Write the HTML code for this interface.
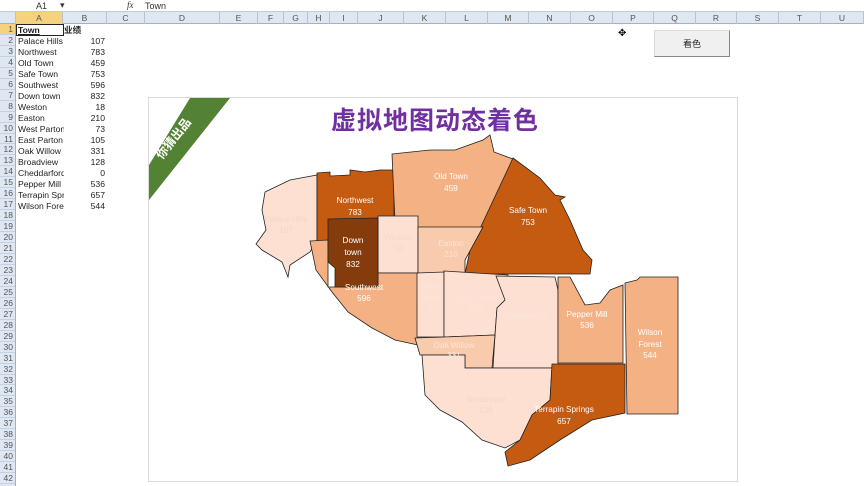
<!DOCTYPE html>
<html><head><meta charset="utf-8"><style>
*{margin:0;padding:0;box-sizing:border-box}
body{width:864px;height:486px;overflow:hidden;background:#fff;font-family:"Liberation Sans","Noto Sans CJK SC",sans-serif;position:relative}
.a{position:absolute}
#fb{left:0;top:0;width:864px;height:12px;background:#fff;border-bottom:1px solid #c8ccd2;font-size:9px;color:#333}
#ch{left:0;top:12px;width:864px;height:12px;background:#dfe7f2;border-bottom:1px solid #9fb1c9;font-size:8.5px;color:#555}
#ch span{position:absolute;top:0;height:12px;line-height:12px;text-align:center;border-right:1px solid #b5c3d6}
#rh{left:0;top:24px;width:16px;height:462px;background:#dfe7f2;border-right:1px solid #9fb1c9;font-size:8.5px;color:#555}
#rh div{height:10.96px;line-height:11px;text-align:right;padding-right:2px;border-bottom:1px solid #c5d1e0}
.c{font-size:8.6px;color:#222;line-height:11px}
.c div{white-space:nowrap;overflow:hidden}
.m text{font-family:"Liberation Sans",sans-serif;font-size:8.2px;fill:#fff;text-anchor:middle}
</style></head><body>
<div class="a" id="fb"><span class="a" style="left:36px;top:1px">A1</span><span class="a" style="left:60px;top:0">▾</span><span class="a" style="left:127px;top:0;font-style:italic;font-family:'Liberation Serif'">fx</span><span class="a" style="left:145px;top:1px">Town</span></div>
<div class="a" id="ch">
<span style="left:0;width:16px"></span><span style="left:16px;width:47px;background:#f6d17e">A</span><span style="left:63px;width:44px">B</span><span style="left:107px;width:38px">C</span><span style="left:145px;width:75px">D</span><span style="left:220px;width:38px">E</span><span style="left:258px;width:26px">F</span><span style="left:284px;width:24px">G</span><span style="left:308px;width:22px">H</span><span style="left:330px;width:28px">I</span><span style="left:358px;width:46px">J</span><span style="left:404px;width:42px">K</span><span style="left:446px;width:42px">L</span><span style="left:488px;width:41px">M</span><span style="left:529px;width:42px">N</span><span style="left:571px;width:42px">O</span><span style="left:613px;width:41px">P</span><span style="left:654px;width:42px">Q</span><span style="left:696px;width:41px">R</span><span style="left:737px;width:42px">S</span><span style="left:779px;width:42px">T</span><span style="left:821px;width:43px">U</span>
</div>
<div class="a" id="rh"><div style="background:#f6d17e">1</div><div>2</div><div>3</div><div>4</div><div>5</div><div>6</div><div>7</div><div>8</div><div>9</div><div>10</div><div>11</div><div>12</div><div>13</div><div>14</div><div>15</div><div>16</div><div>17</div><div>18</div><div>19</div><div>20</div><div>21</div><div>22</div><div>23</div><div>24</div><div>25</div><div>26</div><div>27</div><div>28</div><div>29</div><div>30</div><div>31</div><div>32</div><div>33</div><div>34</div><div>35</div><div>36</div><div>37</div><div>38</div><div>39</div><div>40</div><div>41</div><div>42</div></div>
<div class="a" style="left:16px;top:24px;width:48px;height:12px;border:1.5px solid #222"></div>
<div class="a c" style="left:18px;top:25px;width:46px">
<div style="font-weight:bold;text-decoration:underline;overflow:visible">Town</div>
<div>Palace Hills</div><div>Northwest</div><div>Old Town</div><div>Safe Town</div><div>Southwest</div><div>Down town</div><div>Weston</div><div>Easton</div><div>West Parton</div><div>East Parton</div><div>Oak Willow</div><div>Broadview</div><div>Cheddarford</div><div>Pepper Mill</div><div>Terrapin Spr</div><div>Wilson Forest</div></div>
<div class="a c" style="left:64px;top:25px;font-weight:bold">业绩</div>
<div class="a c" style="left:64px;top:25px;width:41px;text-align:right">
<div>&nbsp;</div><div>107</div><div>783</div><div>459</div><div>753</div><div>596</div><div>832</div><div>18</div><div>210</div><div>73</div><div>105</div><div>331</div><div>128</div><div>0</div><div>536</div><div>657</div><div>544</div></div>
<div class="a" style="left:618px;top:28px;font-size:10px">✥</div>
<div class="a" style="left:654px;top:30px;width:76px;height:27px;background:#f0f0f0;border:1px solid #ddd;border-right:1px solid #888;border-bottom:1px solid #888;font-size:9px;text-align:center;line-height:26px;color:#222">看色</div>
<div class="a" style="left:148px;top:97px;width:590px;height:385px;border:1px solid #d9d9d9;background:#fff;overflow:hidden">
<div class="a" style="left:0;width:572px;top:3px;text-align:center;font-size:25px;color:#7030a0;font-weight:bold;letter-spacing:1px">虚拟地图动态着色</div>
</div>
<svg class="a m" style="left:0;top:0" width="864" height="486">
<polygon points="190,98 230,98 149,200 149,165" fill="#548235"/>
<text x="0" y="0" transform="translate(162,160) rotate(-52)" style="font-family:'Noto Sans CJK SC';font-size:12px;font-weight:bold;text-anchor:start">你猜出品</text>
<g stroke="#222" stroke-width="0.8">
<polygon points="265,192 290,180 317,175 317,240 310,252 290,265 288,277 282,262 262,250 256,244 266,230 262,210" fill="#fde0d2"/>
<polygon points="317,173 330,172 330,176 350,175 350,170 365,172 380,170 394,170 394,240 317,242" fill="#c55a11"/>
<polygon points="392,154 430,150 455,150 483,140 490,135 494,152 513,159 485,228 420,228 395,222" fill="#f4b183"/>
<polygon points="513,158 540,178 555,195 565,197 560,200 570,220 583,250 592,260 590,274 465,274 470,250" fill="#c55a11"/>
<polygon points="378,216 418,216 418,273 378,273" fill="#fde0d2"/>
<polygon points="418,227 483,227 465,260 465,273 418,273" fill="#f8cbad"/>
<polygon points="310,241 328,240 328,287 378,287 378,273 418,273 418,345 395,340 372,328 348,312 332,292 316,270" fill="#f4b183"/>
<polygon points="328,219 378,218 378,287 335,287 335,268 328,262" fill="#843c0c"/>
<polygon points="417,273 444,272 444,337 417,337" fill="#fde0d2"/>
<polygon points="444,271 508,275 505,300 497,308 495,335 444,337" fill="#fde0d2"/>
<polygon points="496,276 555,277 558,290 558,368 493,368 495,335 497,308 505,300" fill="#fde0d2"/>
<polygon points="558,277 570,277 585,305 600,303 610,290 623,285 623,363 558,363" fill="#f4b183"/>
<polygon points="625,283 637,280 640,277 678,277 678,414 627,414" fill="#f4b183"/>
<polygon points="415,338 444,337 495,335 492,368 465,368 465,355 420,355" fill="#f8cbad"/>
<polygon points="422,355 465,355 465,368 552,368 550,400 532,415 520,440 505,448 482,440 462,422 440,410 425,395" fill="#fde0d2"/>
<polygon points="552,364 625,364 625,413 592,420 560,440 530,460 508,466 505,452 520,440 532,415 550,400" fill="#c55a11"/>
</g>
<text x="286" y="222" style="fill:#f5d6c6">Palace Hills</text><text x="286" y="233" style="fill:#f5d6c6">107</text>
<text x="355" y="203">Northwest</text><text x="355" y="215">783</text>
<text x="451" y="179">Old Town</text><text x="451" y="191">459</text>
<text x="528" y="213">Safe Town</text><text x="528" y="225">753</text>
<text x="353" y="243">Down</text><text x="353" y="255">town</text><text x="353" y="267">832</text>
<text x="398" y="240" style="fill:#f8d8c8">Weston</text><text x="398" y="251" style="fill:#f8d8c8">18</text>
<text x="451" y="246" style="fill:#fce3d6">Easton</text><text x="451" y="257" style="fill:#fce3d6">210</text>
<text x="364" y="290">Southwest</text><text x="364" y="301">596</text>
<text x="430" y="290" style="fill:#f8e6dc">West</text><text x="430" y="301" style="fill:#f8e6dc">Parto</text><text x="430" y="312" style="fill:#f8e6dc">n</text><text x="430" y="323" style="fill:#f8e6dc">73</text>
<text x="476" y="301" style="fill:#f8e6dc">East Parton</text><text x="476" y="312" style="fill:#f8e6dc">105</text>
<text x="525" y="319" style="fill:#f8e6dc">Cheddarford</text><text x="525" y="330" style="fill:#f8e6dc">0</text>
<text x="587" y="317">Pepper Mill</text><text x="587" y="328">536</text>
<text x="650" y="335">Wilson</text><text x="650" y="347">Forest</text><text x="650" y="358">544</text>
<text x="454" y="348" style="fill:#fbe6da">Oak Willow</text><text x="454" y="358" style="fill:#fbe6da">331</text>
<text x="486" y="402" style="fill:#f5d6c6">Broadview</text><text x="486" y="413" style="fill:#f5d6c6">128</text>
<text x="564" y="412">Terrapin Springs</text><text x="564" y="424">657</text>
</svg>
</body></html>
